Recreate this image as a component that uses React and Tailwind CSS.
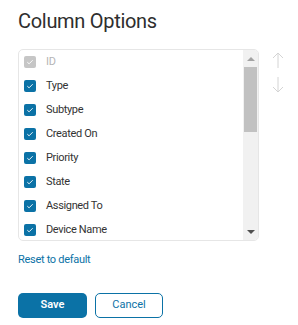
import React from "react";

const columns = [
  { label: "ID", disabled: true },
  { label: "Type" },
  { label: "Subtype" },
  { label: "Created On" },
  { label: "Priority" },
  { label: "State" },
  { label: "Assigned To" },
  { label: "Device Name" },
];

function Check({ disabled }) {
  return (
    <span
      className={
        "flex items-center justify-center w-[12px] h-[12px] rounded-[2px] " +
        (disabled ? "bg-[#c6c6c6]" : "bg-[#0b72a6]")
      }
    >
      <svg width="8" height="8" viewBox="0 0 8 8" fill="none">
        <path d="M1.3 4.2 3.1 5.8 6.7 2.2" stroke="white" strokeWidth="0.9" />
      </svg>
    </span>
  );
}

export default function App() {
  return (
    <div className="w-[298px] h-[325px] bg-white pl-[18px] pt-[7px] font-[Roboto]">
      {/* Title */}
      <h1 className="text-[20px] leading-[28px] text-[#2e2e2e] tracking-[-0.3px]">
        Column Options
      </h1>

      {/* List + reorder arrows */}
      <div className="flex items-start mt-[14px]">
        <div className="flex shrink-0 w-[241px] h-[192px] border border-[#e6e6e6] rounded-[5px] overflow-hidden">
          <ul className="flex-1 overflow-hidden">
            {columns.map((c) => (
              <li key={c.label} className="flex items-center h-[24px] pl-[5px] gap-[10px]">
                <Check disabled={c.disabled} />
                <span
                  className={
                    "text-[11px] tracking-[-0.35px] " +
                    (c.disabled ? "text-[#b5b5b5]" : "text-[#333333]")
                  }
                >
                  {c.label}
                </span>
              </li>
            ))}
          </ul>
          {/* scrollbar */}
          <div className="w-[15px] bg-[#f1f1f1] flex flex-col items-center">
            <div className="h-[17px] flex items-center justify-center">
              <span className="w-0 h-0 border-l-[4px] border-r-[4px] border-b-[4px] border-l-transparent border-r-transparent border-b-[#a3a3a3]" />
            </div>
            <div className="w-[13px] h-[65px] bg-[#c1c1c1]" />
            <div className="flex-1" />
            <div className="h-[17px] flex items-center justify-center">
              <span className="w-0 h-0 border-l-[4px] border-r-[4px] border-t-[4px] border-l-transparent border-r-transparent border-t-[#505050]" />
            </div>
          </div>
        </div>
        <div className="flex flex-col items-center shrink-0 ml-[12px] gap-[9px] pt-[3px]">
          <svg width="14" height="16" viewBox="0 0 14 16" fill="none" stroke="#d4d4d4" strokeWidth="1">
            <path d="M7 1v15M2 6l5-5 5 5" />
          </svg>
          <svg width="14" height="16" viewBox="0 0 14 16" fill="none" stroke="#d4d4d4" strokeWidth="1">
            <path d="M7 0v15M2 10l5 5 5-5" />
          </svg>
        </div>
      </div>

      {/* Reset */}
      <button className="block mt-[11px] text-[11px] leading-[16px] tracking-[-0.3px] text-[#0b72a6]">
        Reset to default
      </button>

      {/* Actions */}
      <div className="flex gap-[8px] mt-[25px]">
        <button className="w-[69px] h-[25px] rounded-[5px] bg-[#0b72a6] text-white text-[11px] font-semibold">
          Save
        </button>
        <button className="w-[68px] h-[25px] rounded-[5px] border border-[#0b72a6] text-[#0b72a6] text-[11px]">
          Cancel
        </button>
      </div>
    </div>
  );
}
